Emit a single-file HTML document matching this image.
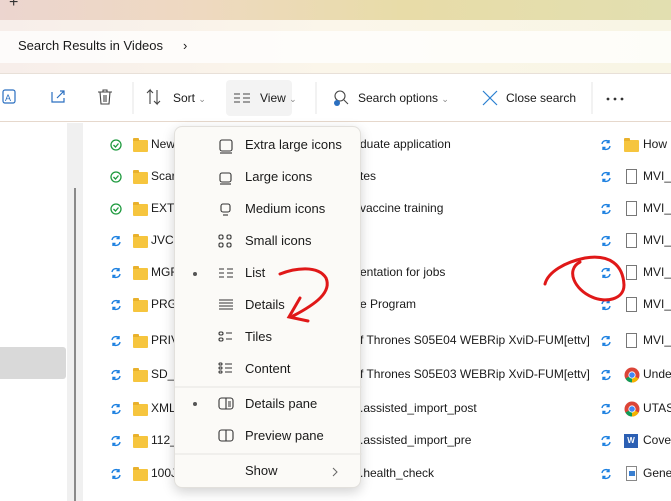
<!DOCTYPE html>
<html><head><meta charset="utf-8"><style>
*{margin:0;padding:0;box-sizing:border-box}
body{width:671px;height:501px;overflow:hidden;position:relative;font-family:"Segoe UI","Liberation Sans",sans-serif;font-size:12px;color:#1a1a1a;background:#fff}
.top{position:absolute;left:0;top:0;width:671px;height:73px;background:linear-gradient(90deg,#ecd5cf 0%,#eed9c0 30%,#e8dca8 60%,#e2dfb0 100%)}
.top2{position:absolute;left:0;top:20px;width:671px;height:53px;background:linear-gradient(90deg,#f7eeea,#fbf6ea 50%,#f8f5e4)}
.crumb{position:absolute;left:0;top:31px;width:671px;height:32px;background:rgba(255,255,255,.75)}
.tb{position:absolute;left:0;top:73px;width:671px;height:49px;background:#fff;border-top:1px solid #e8e0d8;border-bottom:1px solid #e6d8cc}
.t{position:absolute;white-space:nowrap}
.row{position:absolute;height:20px;white-space:nowrap;font-size:12px}
.menu{position:absolute;left:174px;top:126px;width:187px;height:362px;background:#fbfaf7;border:1px solid #e2e0dc;border-radius:8px;box-shadow:0 4px 12px rgba(0,0,0,.18)}
.mi{position:absolute;left:70px;font-size:13px;color:#1a1a1a}
.fold{position:absolute;width:15px;height:12px;background:#f6c53e;border-radius:1px}
.fold:before{content:"";position:absolute;left:0;top:-2px;width:6px;height:3px;background:#e9b12c;border-radius:1px 1px 0 0}
.doc{position:absolute;width:11px;height:15px;border:1px solid #777;background:#fff}
</style></head><body>
<div class="top"></div><div class="top2"></div><div class="crumb"></div>
<div class="t" style="left:9px;top:-6px;font-size:16px;color:#333">+</div>
<div class="t" style="left:18px;top:38px;font-size:13px">Search Results in Videos</div>
<div class="t" style="left:183px;top:38px;font-size:13px">›</div>
<div class="tb"></div>
<div style="position:absolute;left:226px;top:80px;width:66px;height:36px;background:#f3f3f3;border-radius:4px"></div>
<svg style="position:absolute;left:0;top:73px" width="671" height="49">
<g fill="none" stroke="#2a6fc0" stroke-width="1.2"><rect x="3" y="17" width="12" height="13" rx="2"/></g>
<text x="5" y="28" font-size="9" fill="#2a6fc0" font-family="Liberation Sans">A</text>
<g fill="none" stroke="#2a6fc0" stroke-width="1.2"><path d="M52 19v10h12v-4M57 25l7-7M60 18h4v4"/></g>
<g fill="none" stroke="#444" stroke-width="1.1"><path d="M98 19h14M103 19v-2h4v2M100 19l1 12h8l1-12M104 22v7M106 22v7"/></g>
<line x1="133" y1="9" x2="133" y2="41" stroke="#e5e5e5"/>
<g fill="none" stroke="#444" stroke-width="1.1"><path d="M150 31V17l-3 3M150 17l3 3M157 17v14l-3-3M157 31l3-3"/></g>
<g stroke="#444" stroke-width="1"><path d="M234 21h6M234 25h6M234 29h6M243 21h7M243 25h7M243 29h7"/></g>
<line x1="316" y1="9" x2="316" y2="41" stroke="#e5e5e5"/>
<g fill="none" stroke="#444" stroke-width="1.1"><circle cx="340" cy="23" r="5"/><path d="M344 27l4 4"/></g>
<circle cx="337" cy="30" r="3" fill="#2a6fc0"/>
<g stroke="#2a7fd0" stroke-width="1.2"><path d="M483 18l14 14M497 18l-14 14"/></g>
<line x1="592" y1="9" x2="592" y2="41" stroke="#e5e5e5"/>
<g fill="#333"><circle cx="608" cy="26" r="1.4"/><circle cx="615" cy="26" r="1.4"/><circle cx="622" cy="26" r="1.4"/></g>
</svg>
<div class="t" style="left:173px;top:91px;font-size:12px">Sort <span style="color:#888;font-size:9px">⌄</span></div>
<div class="t" style="left:260px;top:91px;font-size:12px">View <span style="color:#888;font-size:9px">⌄</span></div>
<div class="t" style="left:358px;top:91px;font-size:12px">Search options <span style="color:#888;font-size:9px">⌄</span></div>
<div class="t" style="left:506px;top:91px;font-size:12px">Close search</div>
<div style="position:absolute;left:67px;top:123px;width:16px;height:378px;background:#f0f0f0"></div>
<div style="position:absolute;left:74px;top:188px;width:2px;height:313px;background:#8a8a8a"></div>
<div style="position:absolute;left:0;top:347px;width:66px;height:32px;background:#d9d9d9;border-radius:0 3px 3px 0"></div>
<div id="rows"></div>
<script>
var ys=[145,177,209,241,273,305,341,375,409,441,474];
var names=["New","Scar","EXTN","JVC","MGF","PRG","PRIV","SD_V","XML","112_","100J"];
var mids=["duate application","tes","vaccine training","","entation for jobs","e Program","f Thrones S05E04 WEBRip XviD-FUM[ettv]","f Thrones S05E03 WEBRip XviD-FUM[ettv]",".assisted_import_post",".assisted_import_pre",".health_check"];
var rights=["How","MVI_0","MVI_0","MVI_0","MVI_0","MVI_0","MVI_0","Unde","UTAS","Cover","Genev"];
var h="";
function sync(x,y){return '<svg style="position:absolute;left:'+(x-6)+'px;top:'+(y-6)+'px" width="12" height="12"><path d="M2 5a4 4 0 0 1 7-2M9 1v2.5H6.5M10 7a4 4 0 0 1-7 2M3 11V8.5h2.5" fill="none" stroke="#1a7fe0" stroke-width="1.4"/></svg>';}
for(var i=0;i<11;i++){var y=ys[i];
 if(i<3)h+='<svg style="position:absolute;left:110px;top:'+(y-6)+'px" width="12" height="12"><circle cx="6" cy="6" r="5" fill="none" stroke="#1e9a3e" stroke-width="1.3"/><path d="M3.5 6l2 2 3-3.5" fill="none" stroke="#1e9a3e" stroke-width="1.3"/></svg>';
 else h+=sync(116,y);
 h+='<div class="fold" style="left:133px;top:'+(y-5)+'px"></div>';
 h+='<div class="row" style="left:151px;top:'+(y-8)+'px">'+names[i]+'</div>';
 h+='<div class="row" style="left:360px;top:'+(y-8)+'px">'+mids[i]+'</div>';
 h+=sync(606,y);
 if(i==0)h+='<div class="fold" style="left:624px;top:'+(y-5)+'px"></div>';
 else if(i<7)h+='<div class="doc" style="left:626px;top:'+(y-8)+'px"></div>';
 else if(i<9)h+='<svg style="position:absolute;left:624px;top:'+(y-8)+'px" width="16" height="16"><circle cx="8" cy="8" r="7.5" fill="#db4437"/><path d="M8 8L1.5 11.5A7.5 7.5 0 0 0 8 15.5Z" fill="#0f9d58"/><path d="M8 8L14.5 11.5A7.5 7.5 0 0 1 8 15.5Z" fill="#f4b400"/><circle cx="8" cy="8" r="3.6" fill="#fff"/><circle cx="8" cy="8" r="2.8" fill="#4285f4"/></svg>';
 else if(i==9)h+='<div style="position:absolute;left:624px;top:'+(y-7)+'px;width:14px;height:14px;background:#2b5fb3;color:#fff;font-size:8px;font-weight:bold;text-align:center;line-height:14px">W</div>';
 else h+='<div class="doc" style="left:626px;top:'+(y-8)+'px;border-color:#888"><div style="margin:4px 2px;width:6px;height:5px;background:#3a7fd0"></div></div>';
 h+='<div class="row" style="left:643px;top:'+(y-8)+'px">'+rights[i]+'</div>';
}
document.getElementById('rows').innerHTML=h;
</script>
<div class="menu">
<svg style="position:absolute;left:0;top:0" width="187" height="362">
<g fill="none" stroke="#333" stroke-width="1.1">
<rect x="45" y="13" width="12" height="11" rx="2"/><path d="M45 26h12"/>
<rect x="45" y="46" width="11" height="9" rx="2"/><path d="M45 57h11"/>
<rect x="46" y="77" width="9" height="8" rx="2"/><path d="M48 88h5"/>
<rect x="44" y="108" width="4" height="4" rx="1.5"/><rect x="52" y="108" width="4" height="4" rx="1.5"/><rect x="44" y="116" width="4" height="4" rx="1.5"/><rect x="52" y="116" width="4" height="4" rx="1.5"/>
<path d="M44 142h5M44 146h5M44 150h5M52 142h6M52 146h6M52 150h6"/>
<path d="M44 173h14M44 176h14M44 179h14M44 182h14"/>
<rect x="44" y="205" width="4" height="3" rx="1.5"/><rect x="44" y="211" width="4" height="3" rx="1.5"/><path d="M51 206h6M51 212h6"/>
<rect x="44" y="236" width="3" height="2" rx="1"/><rect x="44" y="240" width="3" height="2" rx="1"/><rect x="44" y="244" width="3" height="2" rx="1"/><path d="M50 237h7M50 241h7M50 245h7"/>
<rect x="44" y="271" width="14" height="11" rx="2.5"/><path d="M51 271v11M53 275h3M53 277h3M53 279h3"/>
<rect x="44" y="303" width="14" height="11" rx="2.5"/><path d="M51 303v11"/>
</g>
<circle cx="20" cy="147" r="2" fill="#555"/><circle cx="20" cy="277" r="2" fill="#555"/>
<line x1="0" y1="260" x2="187" y2="260" stroke="#e6e4e0"/><line x1="0" y1="327" x2="187" y2="327" stroke="#e6e4e0"/>
<path d="M158 341l4 4-4 4" fill="none" stroke="#666" stroke-width="1"/>
</svg>
<div class="mi" style="top:10px">Extra large icons</div>
<div class="mi" style="top:42px">Large icons</div>
<div class="mi" style="top:74px">Medium icons</div>
<div class="mi" style="top:106px">Small icons</div>
<div class="mi" style="top:138px">List</div>
<div class="mi" style="top:170px">Details</div>
<div class="mi" style="top:202px">Tiles</div>
<div class="mi" style="top:234px">Content</div>
<div class="mi" style="top:269px">Details pane</div>
<div class="mi" style="top:301px">Preview pane</div>
<div class="mi" style="top:336px">Show</div>
</div>
<svg style="position:absolute;left:0;top:0" width="671" height="501">
<g fill="none" stroke="#e01818" stroke-width="3" stroke-linecap="round">
<path d="M280 274C295 268 318 265 326 278C332 292 316 304 293 316"/>
<path d="M300 298L289 317L308 321"/>
<path d="M545 284C548 272 565 262 585 258C610 254 623 265 624 285C624 300 605 303 592 297C575 290 565 270 580 262"/>
</g></svg>
</body></html>
